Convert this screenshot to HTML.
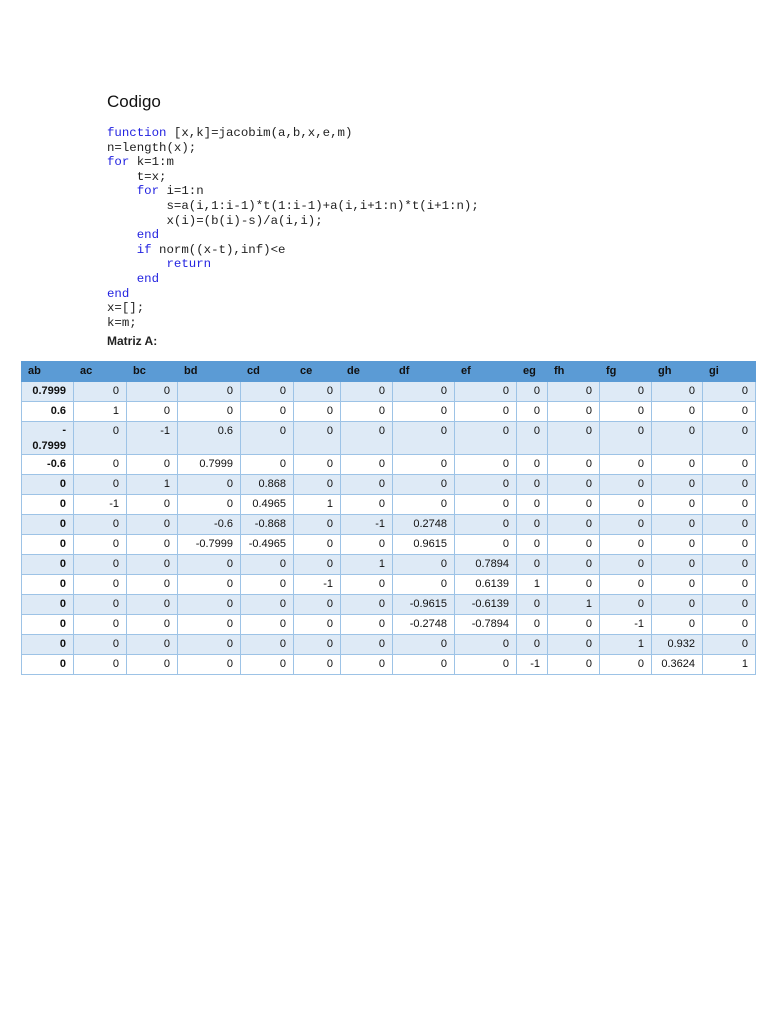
<!DOCTYPE html>
<html><head><meta charset="utf-8"><style>
body{margin:0;background:#fff;width:768px;height:1024px;position:relative;font-family:"Liberation Sans",sans-serif}
h1{position:absolute;left:107px;top:92px;margin:0;font-weight:normal;font-size:17px;color:#111}
pre{position:absolute;left:107px;top:126px;margin:0;font-family:"Liberation Mono",monospace;font-size:12.4px;line-height:14.6px;color:#222}
.k{color:#2323e0}
.m{position:absolute;left:107px;top:334px;font-size:12px;font-weight:bold;color:#222}
table{position:absolute;left:21px;top:361px;border-collapse:collapse;table-layout:fixed;font-size:11px;color:#111}
td,th{border:1px solid #9dc3e6;padding:0 7px 0 3px;height:19px;text-align:right;vertical-align:top;line-height:18px}
th{background:#5b9bd5;color:#111;text-align:left;font-weight:bold;border-color:#5b9bd5;padding-left:6px}
tr.s td{background:#deeaf6}
td:first-child{font-weight:bold}
tr.t td{height:32px}
tr.t td:first-child{line-height:16px}
</style></head><body>
<h1>Codigo</h1>
<pre><span class="k">function</span> [x,k]=jacobim(a,b,x,e,m)
n=length(x);
<span class="k">for</span> k=1:m
    t=x;
    <span class="k">for</span> i=1:n
        s=a(i,1:i-1)*t(1:i-1)+a(i,i+1:n)*t(i+1:n);
        x(i)=(b(i)-s)/a(i,i);
    <span class="k">end</span>
    <span class="k">if</span> norm((x-t),inf)&lt;e
        <span class="k">return</span>
    <span class="k">end</span>
<span class="k">end</span>
x=[];
k=m;</pre>
<div class="m">Matriz A:</div>
<table>
<colgroup><col style="width:52px"><col style="width:53px"><col style="width:51px"><col style="width:63px"><col style="width:53px"><col style="width:47px"><col style="width:52px"><col style="width:62px"><col style="width:62px"><col style="width:31px"><col style="width:52px"><col style="width:52px"><col style="width:51px"><col style="width:53px"></colgroup>
<tr><th>ab</th><th>ac</th><th>bc</th><th>bd</th><th>cd</th><th>ce</th><th>de</th><th>df</th><th>ef</th><th>eg</th><th>fh</th><th>fg</th><th>gh</th><th>gi</th></tr>
<tr class="s"><td>0.7999</td><td>0</td><td>0</td><td>0</td><td>0</td><td>0</td><td>0</td><td>0</td><td>0</td><td>0</td><td>0</td><td>0</td><td>0</td><td>0</td></tr>
<tr><td>0.6</td><td>1</td><td>0</td><td>0</td><td>0</td><td>0</td><td>0</td><td>0</td><td>0</td><td>0</td><td>0</td><td>0</td><td>0</td><td>0</td></tr>
<tr class="s t"><td>-<br>0.7999</td><td>0</td><td>-1</td><td>0.6</td><td>0</td><td>0</td><td>0</td><td>0</td><td>0</td><td>0</td><td>0</td><td>0</td><td>0</td><td>0</td></tr>
<tr><td>-0.6</td><td>0</td><td>0</td><td>0.7999</td><td>0</td><td>0</td><td>0</td><td>0</td><td>0</td><td>0</td><td>0</td><td>0</td><td>0</td><td>0</td></tr>
<tr class="s"><td>0</td><td>0</td><td>1</td><td>0</td><td>0.868</td><td>0</td><td>0</td><td>0</td><td>0</td><td>0</td><td>0</td><td>0</td><td>0</td><td>0</td></tr>
<tr><td>0</td><td>-1</td><td>0</td><td>0</td><td>0.4965</td><td>1</td><td>0</td><td>0</td><td>0</td><td>0</td><td>0</td><td>0</td><td>0</td><td>0</td></tr>
<tr class="s"><td>0</td><td>0</td><td>0</td><td>-0.6</td><td>-0.868</td><td>0</td><td>-1</td><td>0.2748</td><td>0</td><td>0</td><td>0</td><td>0</td><td>0</td><td>0</td></tr>
<tr><td>0</td><td>0</td><td>0</td><td>-0.7999</td><td>-0.4965</td><td>0</td><td>0</td><td>0.9615</td><td>0</td><td>0</td><td>0</td><td>0</td><td>0</td><td>0</td></tr>
<tr class="s"><td>0</td><td>0</td><td>0</td><td>0</td><td>0</td><td>0</td><td>1</td><td>0</td><td>0.7894</td><td>0</td><td>0</td><td>0</td><td>0</td><td>0</td></tr>
<tr><td>0</td><td>0</td><td>0</td><td>0</td><td>0</td><td>-1</td><td>0</td><td>0</td><td>0.6139</td><td>1</td><td>0</td><td>0</td><td>0</td><td>0</td></tr>
<tr class="s"><td>0</td><td>0</td><td>0</td><td>0</td><td>0</td><td>0</td><td>0</td><td>-0.9615</td><td>-0.6139</td><td>0</td><td>1</td><td>0</td><td>0</td><td>0</td></tr>
<tr><td>0</td><td>0</td><td>0</td><td>0</td><td>0</td><td>0</td><td>0</td><td>-0.2748</td><td>-0.7894</td><td>0</td><td>0</td><td>-1</td><td>0</td><td>0</td></tr>
<tr class="s"><td>0</td><td>0</td><td>0</td><td>0</td><td>0</td><td>0</td><td>0</td><td>0</td><td>0</td><td>0</td><td>0</td><td>1</td><td>0.932</td><td>0</td></tr>
<tr><td>0</td><td>0</td><td>0</td><td>0</td><td>0</td><td>0</td><td>0</td><td>0</td><td>0</td><td>-1</td><td>0</td><td>0</td><td>0.3624</td><td>1</td></tr>
</table>
</body></html>
